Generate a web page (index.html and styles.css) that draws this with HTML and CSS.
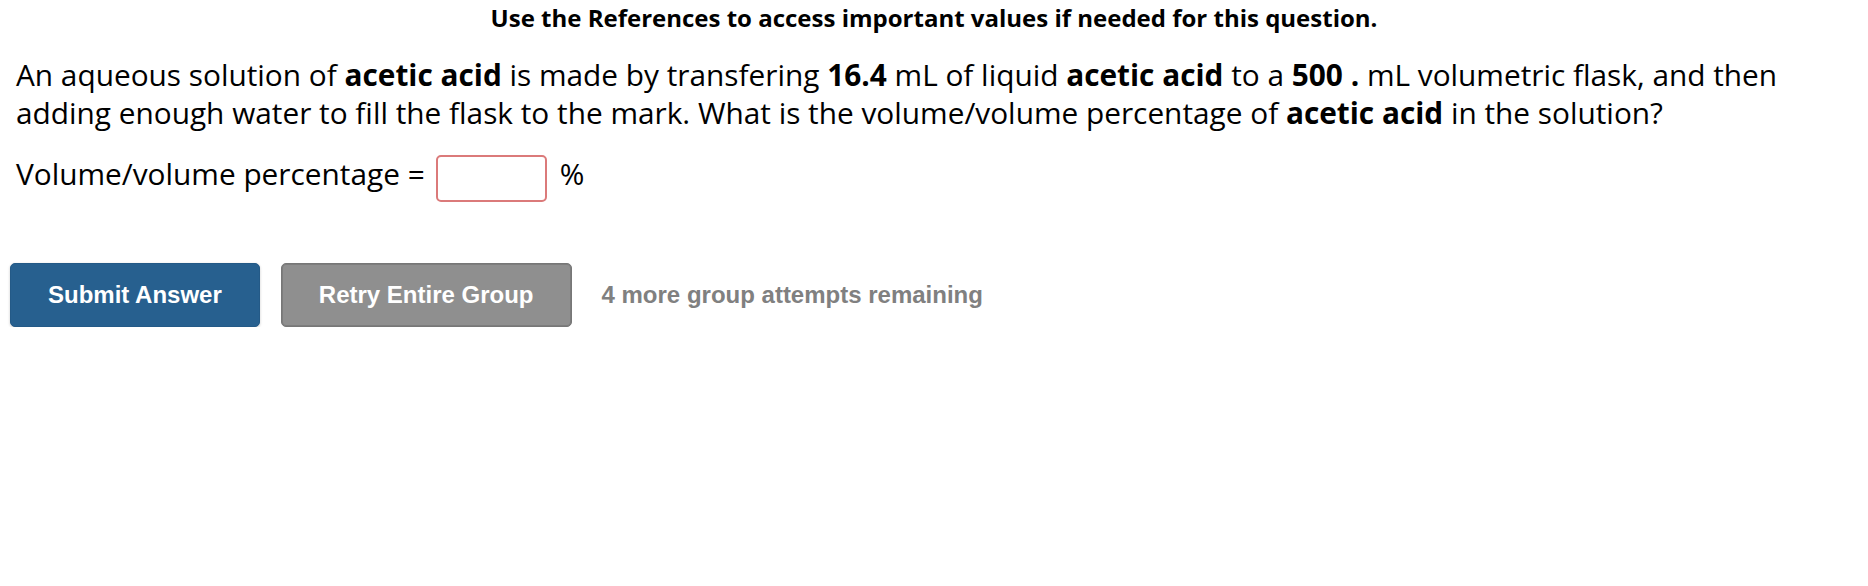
FILE: index.html
```html
<!DOCTYPE html>
<html lang="en">
<head>
<meta charset="utf-8">
<title>Question</title>
<link rel="stylesheet" href="styles.css">
</head>
<body>
<div class="refs">Use the References to access important values if needed for this question.</div>
<p class="question">An aqueous solution of <b>acetic acid</b> is made by transfering <b>16.4</b> mL of liquid <b>acetic acid</b> to a <b>500 .</b> mL volumetric flask, and then adding enough water to fill the flask to the mark. What is the volume/volume percentage of <b>acetic acid</b> in the solution?</p>
<div class="answer-row">
  <span class="label">Volume/volume percentage =</span>
  <input class="answer-input" type="text" aria-label="Volume/volume percentage">
  <span class="unit">%</span>
</div>
<div class="actions">
  <button class="btn btn-submit" type="button">Submit Answer</button>
  <button class="btn btn-retry" type="button">Retry Entire Group</button>
  <span class="attempts">4 more group attempts remaining</span>
</div>
</body>
</html>
```
FILE: styles.css
```css
body {
  margin: 0;
  background: #ffffff;
  color: #000000;
  font-family: "Open Sans", "DejaVu Sans", sans-serif;
}

.refs {
  margin: 2px 0 0;
  text-align: center;
  font-size: 24px;
  font-weight: 700;
  line-height: 32px;
}

.question {
  margin: 22px 0 0 16px;
  font-size: 29.8px;
  line-height: 38px;
}

.question b {
  font-weight: 700;
}

.answer-row {
  display: flex;
  align-items: flex-start;
  margin: 23px 0 0 16px;
  height: 47px;
  font-size: 29.8px;
  line-height: 38px;
}

.answer-input {
  box-sizing: border-box;
  width: 111px;
  height: 47px;
  margin: 0 13px 0 11px;
  border: 2.5px solid #db7a7a;
  border-radius: 5px;
  background: #ffffff;
  padding: 0 8px;
  font: inherit;
  outline: none;
}

.actions {
  display: flex;
  align-items: center;
  margin: 61px 0 0 10px;
}

.btn {
  box-sizing: border-box;
  height: 64px;
  padding: 0 37px;
  border-radius: 5px;
  font-family: "Liberation Sans", Arial, sans-serif;
  font-size: 24px;
  font-weight: 700;
  color: #ffffff;
  cursor: pointer;
}

.btn-submit {
  background: #27608f;
  border: 1px solid #245a87;
  box-shadow: 0 1px 3px rgba(0, 0, 0, 0.2);
}

.btn-retry {
  margin-left: 21px;
  background: #8f8f8f;
  border: 1px solid #777777;
  box-shadow: 0 0 0 1px #7d7d7d inset;
}

.attempts {
  margin-left: 30px;
  font-family: "Liberation Sans", Arial, sans-serif;
  font-size: 24px;
  font-weight: 700;
  color: #808080;
}
```
